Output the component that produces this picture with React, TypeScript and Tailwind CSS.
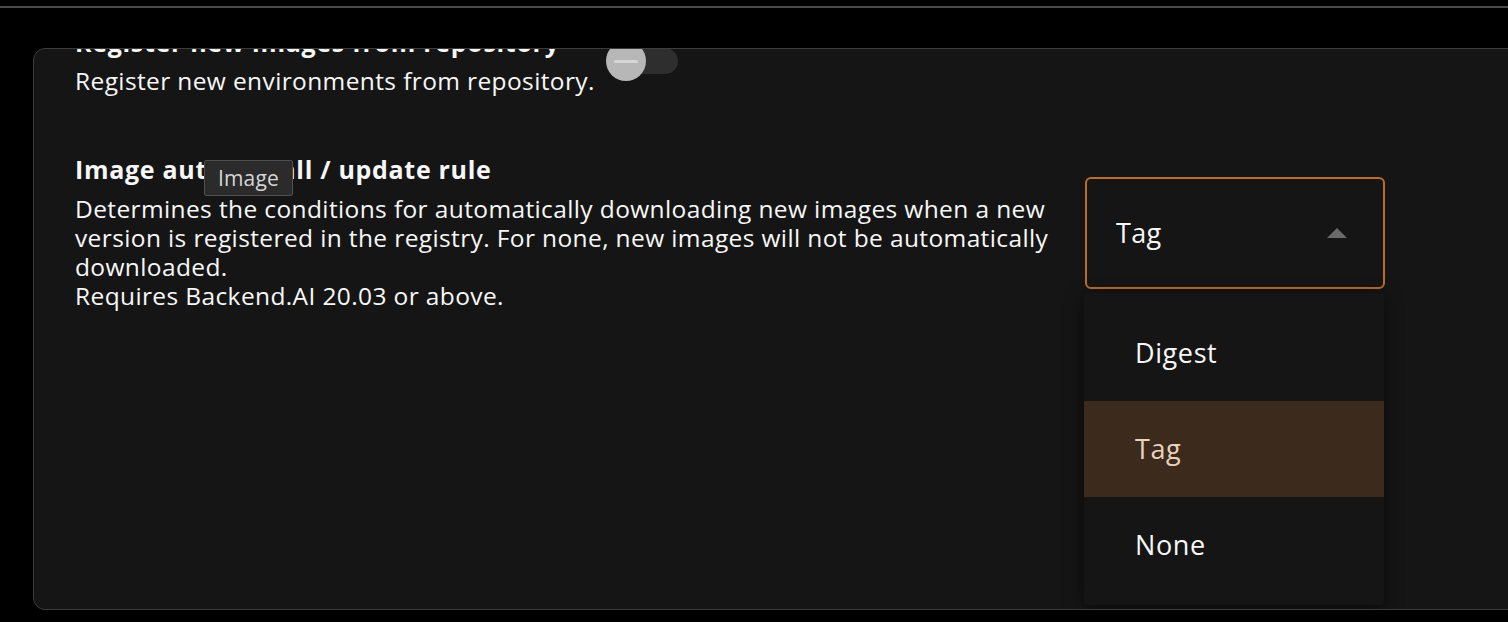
import React from "react";

function Toggle() {
  return (
    <div className="relative mt-[13px] h-[40px] w-[72px] shrink-0">
      <div className="absolute left-[6px] top-[7px] h-[26px] w-[66px] rounded-full bg-[#2e2e2e]" />
      <div className="absolute left-0 top-0 flex h-[40px] w-[40px] items-center justify-center rounded-full bg-[#b7b7b7]">
        <div className="h-[3px] w-[24px] rounded-full bg-[#d6d6d6]" />
      </div>
    </div>
  );
}

function Select() {
  const items = ["Digest", "Tag", "None"];
  return (
    <div className="relative mt-[22px] w-[300px] shrink-0">
      <div className="flex h-[112px] items-center justify-between rounded-[6px] border-2 border-[#bd6b2b] pl-[29px] pr-[36px]">
        <span className="text-[27px] tracking-[0.3px] text-[#f7f7f7]">Tag</span>
        <svg width="20" height="10" viewBox="0 0 20 10" className="mt-[-1px]">
          <path d="M0 10 L10 0 L20 10 Z" fill="#6a6a6a" />
        </svg>
      </div>
      <div className="absolute left-[-1px] top-[calc(100%+4px)] w-[300px] rounded-[4px] bg-[#151515] py-[12px] shadow-[0_4px_18px_rgba(0,0,0,0.55)]">
        {items.map((it) => (
          <div
            key={it}
            className={
              it === "Tag"
                ? "flex h-[96px] items-center bg-[#3c2a1c] pl-[51px] text-[27px] tracking-[0.6px] text-[#e8d3bd]"
                : "flex h-[96px] items-center pl-[51px] text-[27px] tracking-[0.6px] text-[#f7f7f7]"
            }
          >
            {it}
          </div>
        ))}
      </div>
    </div>
  );
}

export default function App() {
  return (
    <div className="h-[622px] w-full overflow-hidden bg-black font-['Open_Sans',sans-serif] text-[#f7f7f7]">
      <div className="pt-[6px]">
        <div className="h-[2px] bg-[#4a4a4a]" />
      </div>
      <div className="ml-[33px] mr-[-24px] mt-[40px] h-[562px] overflow-hidden rounded-[12px] border border-[#3c3c3c] bg-[#151515]">
        <div className="mt-[-21px] pl-[41px]">
          <div className="flex items-start">
            <div className="w-[531px] shrink-0">
              <div className="whitespace-nowrap text-[25px] font-bold leading-[29px] tracking-[0.7px]">
                Register new images from repository
              </div>
              <div className="mt-[9px] whitespace-nowrap text-[24.5px] leading-[29px] tracking-[0.38px]">
                Register new environments from repository.
              </div>
            </div>
            <Toggle />
          </div>

          <div className="mt-[60px] flex items-start">
            <div className="w-[1010px] shrink-0">
              <div className="relative whitespace-nowrap text-[25px] font-bold leading-[29px] tracking-[0.7px]">
                Image auto install / update rule
                <div className="absolute left-[129px] top-[5px] flex h-[36px] w-[89px] items-center justify-center rounded-[2px] border border-[#4f4f4f] bg-[#2b2b2b] text-[21px] font-normal tracking-[0.2px] text-[#d6d6d6]">
                  Image
                </div>
              </div>
              <div className="mt-[10px] text-[24.5px] leading-[29px] tracking-[0.38px]">
                <div className="whitespace-nowrap">
                  Determines the conditions for automatically downloading new images when a new
                </div>
                <div className="whitespace-nowrap">
                  version is registered in the registry. For none, new images will not be automatically
                </div>
                <div className="whitespace-nowrap">downloaded.</div>
                <div className="whitespace-nowrap">Requires Backend.AI 20.03 or above.</div>
              </div>
            </div>
            <Select />
          </div>
        </div>
      </div>
    </div>
  );
}
